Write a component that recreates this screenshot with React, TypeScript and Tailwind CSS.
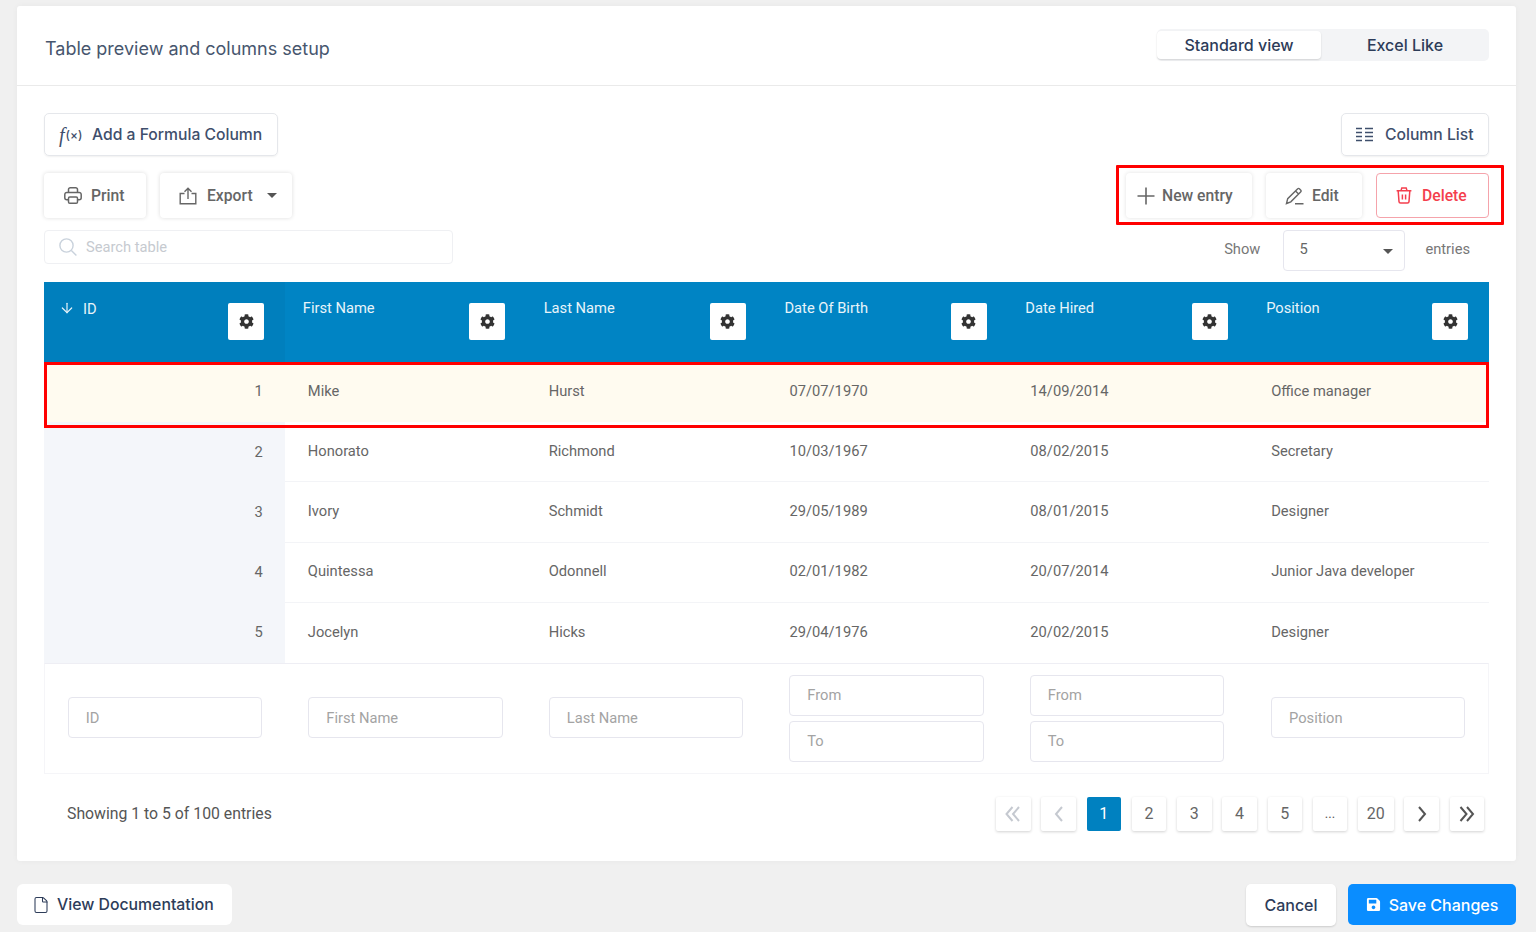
import React from "react";
import { ArrowDown, File } from "lucide-react";
import { FaCog, FaSave } from "react-icons/fa";

const columns = ["ID", "First Name", "Last Name", "Date Of Birth", "Date Hired", "Position"];
const rows = [
  ["1", "Mike", "Hurst", "07/07/1970", "14/09/2014", "Office manager"],
  ["2", "Honorato", "Richmond", "10/03/1967", "08/02/2015", "Secretary"],
  ["3", "Ivory", "Schmidt", "29/05/1989", "08/01/2015", "Designer"],
  ["4", "Quintessa", "Odonnell", "02/01/1982", "20/07/2014", "Junior Java developer"],
  ["5", "Jocelyn", "Hicks", "29/04/1976", "20/02/2015", "Designer"],
];

function Field({ label }: { label: string }) {
  return (
    <div className="flex h-[41px] w-full items-center rounded-[4px] border border-[#e6e6ee] bg-white pl-[17px] text-[14.7px] text-[#a3a3a3]">
      {label}
    </div>
  );
}

function PageBtn({ children, active, wide }: { children: React.ReactNode; active?: boolean; wide?: boolean }) {
  return (
    <div
      className={
        "flex h-[34px] items-center justify-center rounded-[2px] text-[16px] " +
        (wide ? "w-[35.5px] " : "w-[34.5px] ") +
        (active ? "bg-[#0081c0] text-white" : "bg-white text-[#666] shadow-[0_1px_3px_rgba(0,0,0,0.18)]")
      }
    >
      {children}
    </div>
  );
}

function Chevrons({ dir, double, color }: { dir: "l" | "r"; double?: boolean; color: string }) {
  const d = dir === "l"
    ? (double ? "M7.5 1 1.5 8l6 7M14 1 8 8l6 7" : "M8 1 2 8l6 7")
    : (double ? "M1.5 1l6 7-6 7M8 1l6 7-6 7" : "M2 1l6 7-6 7");
  const w = double ? 16 : 10;
  return (
    <svg width={w} height="16" viewBox={`0 0 ${w} 16`} fill="none" stroke={color} strokeWidth="2">
      <path d={d} />
    </svg>
  );
}

function ToolBtn({ children, className }: { children: React.ReactNode; className: string }) {
  return (
    <div className={"flex h-[45px] items-center rounded-[4px] bg-white font-['Roboto',sans-serif] text-[15.7px] font-medium text-[#666] " + className}>
      {children}
    </div>
  );
}

export default function App() {
  return (
    <div className="h-[932px] w-[1536px] overflow-hidden bg-[#f0f0f0] px-[17px] pr-[20px] pt-[6px] font-['Inter',sans-serif]">
      <div className="h-[855px] rounded-[3px] bg-white shadow-[0_0_6px_rgba(0,0,0,0.04)]">
        <div className="flex h-[80px] items-center justify-between border-b border-[#eaeaea] pl-[28px] pr-[27px]">
          <h1 className="pt-[6px] text-[18px] text-[#47566e]">Table preview and columns setup</h1>
          <div className="mb-[1px] flex h-[32px] w-[332px] items-start rounded-[5px] bg-[#f3f4f6] text-[16px] font-medium text-[#2d3c59]">
            <div className="mt-[2px] flex h-[28px] w-[164px] items-center justify-center rounded-[4px] bg-white shadow-[0_1px_2px_rgba(0,0,0,0.14)]">Standard view</div>
            <div className="mt-[2px] flex h-[28px] flex-1 items-center justify-center">Excel Like</div>
          </div>
        </div>

        <div className="px-[27px] pt-[27px]">
          <div className="flex h-[43px] justify-between text-[15.7px] font-medium text-[#3f4f6c]">
            <div className="flex w-[234px] items-center rounded-[5px] border border-[#e5e7eb] pl-[14px] shadow-[0_1px_2px_rgba(0,0,0,0.06)]">
              <span className="flex w-[33px] items-center">
                <span className="font-['Liberation_Serif',serif] text-[20px] font-normal italic leading-none">f</span>
                <span className="ml-[1px] text-[12px] font-medium leading-none">(×)</span>
              </span>
              Add a Formula Column
            </div>
            <div className="flex w-[148px] items-center rounded-[5px] border border-[#e5e7eb] pl-[14px] shadow-[0_1px_2px_rgba(0,0,0,0.06)]">
              <svg width="17" height="15" viewBox="0 0 17 15" className="mr-[12px]" fill="none" stroke="#3f4f6c" strokeWidth="1.4">
                <path d="M0 1.5h6M0 5.5h6M0 9.5h6M0 13.5h6M9 1.5h8M9 5.5h8M9 9.5h8M9 13.5h8" />
              </svg>
              Column List
            </div>
          </div>

          <div className="mt-[17px] flex h-[45px] justify-between">
            <div className="flex gap-[14px]">
              <ToolBtn className="w-[102px] pl-[20px] shadow-[0_0_4px_rgba(0,0,0,0.14)]">
                <svg width="18" height="17" viewBox="0 0 18 17" className="mr-[9px]" fill="none" stroke="#666" strokeWidth="1.5">
                  <path d="M4.5 5.5V2.6A1.8 1.8 0 0 1 6.3.8h5.4a1.8 1.8 0 0 1 1.8 1.8v2.9M4.3 12.8H2.8a2 2 0 0 1-2-2V7.5a2 2 0 0 1 2-2h12.4a2 2 0 0 1 2 2v3.3a2 2 0 0 1-2 2h-1.5" />
                  <rect x="4.5" y="10" width="9" height="6.2" rx="1.3" />
                </svg>
                Print
              </ToolBtn>
              <ToolBtn className="w-[132px] pl-[19px] shadow-[0_0_4px_rgba(0,0,0,0.14)]">
                <svg width="18" height="18" viewBox="0 0 18 18" className="mr-[10px]" fill="none" stroke="#666" strokeWidth="1.4">
                  <path d="M5.5 6.5H1.2v10.3h15.6V6.5h-4.3M9 12V1.5M5.5 4.8 9 1.3l3.5 3.5" />
                </svg>
                Export
                <span className="ml-[14px] h-0 w-0 border-x-[5px] border-t-[5px] border-x-transparent border-t-[#555]" />
              </ToolBtn>
            </div>
            <div className="relative flex gap-[14px]">
              <ToolBtn className="w-[126px] pl-[11px] shadow-[0_0_4px_rgba(0,0,0,0.12)]">
                <svg width="18" height="18" viewBox="0 0 18 18" className="mr-[7px]" fill="none" stroke="#666" strokeWidth="1.6">
                  <path d="M9 .5v17M.5 9h17" />
                </svg>
                New entry
              </ToolBtn>
              <ToolBtn className="w-[96px] pl-[19px] shadow-[0_0_4px_rgba(0,0,0,0.12)]">
                <svg width="19" height="18" viewBox="0 0 19 18" className="mr-[8px]" fill="none" stroke="#666" strokeWidth="1.4">
                  <path d="M1.5 16.5 2.7 11.7 12.5 1.9a1.5 1.5 0 0 1 2.1 0l1 1a1.5 1.5 0 0 1 0 2.1L5.8 14.8l-4.3 1.7ZM10.5 4l3.6 3.6M10 16.8h8.5" />
                </svg>
                Edit
              </ToolBtn>
              <ToolBtn className="w-[113px] border border-[#f5a3ab] pl-[19px] text-[#f43f4e]">
                <svg width="16" height="17" viewBox="0 0 16 17" className="mr-[10px]" fill="none" stroke="#f43f4e" strokeWidth="1.5">
                  <path d="M.6 3.8h14.8M5 3.6 5.8 1h4.4l.8 2.6M2.2 4l.8 10.6a1.5 1.5 0 0 0 1.5 1.4h7a1.5 1.5 0 0 0 1.5-1.4L13.8 4M6.4 7.5v5M9.6 7.5v5" />
                </svg>
                Delete
              </ToolBtn>
              <div className="pointer-events-none absolute -bottom-[7px] -left-[10px] -right-[15px] -top-[8px] rounded-[1px] border-[3px] border-[#ff0000]" />
            </div>
          </div>

          <div className="mt-[12px] flex h-[41px] items-start justify-between">
            <div className="flex h-[34px] w-[409px] items-center rounded-[4px] border border-[#eff0f3] pl-[14px] font-['Roboto',sans-serif] text-[14.7px] text-[#c6cad0]">
              <svg width="18" height="18" viewBox="0 0 18 18" className="mr-[9px]" fill="none" stroke="#c9d2dc" strokeWidth="1.4">
                <circle cx="7.5" cy="7.5" r="6.6" />
                <path d="m12.4 12.4 5 5" />
              </svg>
              Search table
            </div>
            <div className="flex items-center pr-[19px] font-['Roboto',sans-serif] text-[14.7px] text-[#777]">
              <span className="mb-[2px] mr-[23px]">Show</span>
              <div className="flex h-[41px] w-[122px] items-center justify-between rounded-[4px] border border-[#e6e6ee] pb-[2px] pl-[15px] pr-[11px] text-[#666]">
                5<span className="mt-[3px] h-0 w-0 border-x-[5px] border-t-[5px] border-x-transparent border-t-[#555]" />
              </div>
              <span className="mb-[2px] ml-[20px]">entries</span>
            </div>
          </div>

          <div className="mt-[11px] font-['Roboto',sans-serif]">
            <div className="grid h-[80px] grid-cols-6 bg-[#0084c4] text-[14.7px] text-[#e8f4fa]">
              {columns.map((c, i) => (
                <div key={c} className={"relative flex items-start pl-[18px] pt-[15px] " + (i === 0 ? "bg-[#007fbd]" : "")}>
                  {i === 0 && <ArrowDown size={16} strokeWidth={1.8} className="ml-[-3px] mr-[8px] mt-[3px]" />}
                  <span className={i === 0 ? "pt-[1px]" : ""}>{c}</span>
                  <div className="absolute right-[20.5px] top-[21px] flex h-[37px] w-[36px] items-center justify-center rounded-[2px] bg-white text-[#333]">
                    <FaCog size={15} />
                  </div>
                </div>
              ))}
            </div>

            <div className="relative">
              {rows.map((r, ri) => (
                <div key={r[0]} className={"grid h-[60.2px] grid-cols-6 items-stretch text-[14.7px] text-[#666] " + (ri === 0 ? "bg-[#fffbf0]" : "")}>
                  {r.map((v, i) => (
                    <div
                      key={i}
                      className={
                        "flex items-center pb-[1.5px] " +
                        (i === 0 ? "justify-end pr-[22px] " + (ri === 0 ? "" : "bg-[#f4f6fa]") : "pl-[23px] " + (ri > 0 && ri < 4 ? "border-b border-[#f3f4f7]" : ""))
                      }
                    >
                      {v}
                    </div>
                  ))}
                </div>
              ))}
              <div className="pointer-events-none absolute left-0 right-0 top-0 h-[66px] border-[3px] border-[#ff0000]" />
            </div>

            <div className="grid h-[111px] grid-cols-6 items-center border-x border-y border-x-[#f5f5f8] border-y-[#eeeef4] border-b-[#f5f5f8]">
              {["ID", "First Name", "Last Name"].map((l) => (
                <div key={l} className="mb-[1px] pl-[22.8px] pr-[23.5px]"><Field label={l} /></div>
              ))}
              {[0, 1].map((k) => (
                <div key={k} className="flex flex-col gap-[5px] pl-[22.8px] pr-[23.5px]">
                  <Field label="From" />
                  <Field label="To" />
                </div>
              ))}
              <div className="mb-[1px] pl-[23.5px] pr-[23.5px]"><Field label="Position" /></div>
            </div>

            <div className="flex h-[80px] items-center justify-between pl-[23px] pr-[5px]">
              <span className="text-[15.8px] text-[#555]">Showing 1 to 5 of 100 entries</span>
              <div className="flex gap-[10.75px]">
                <PageBtn><Chevrons dir="l" double color="#c5c9d0" /></PageBtn>
                <PageBtn><Chevrons dir="l" color="#c5c9d0" /></PageBtn>
                <PageBtn active>1</PageBtn>
                <PageBtn>2</PageBtn>
                <PageBtn>3</PageBtn>
                <PageBtn>4</PageBtn>
                <PageBtn>5</PageBtn>
                <PageBtn><span className="text-[13px] text-[#555]">...</span></PageBtn>
                <PageBtn wide>20</PageBtn>
                <PageBtn><Chevrons dir="r" color="#555" /></PageBtn>
                <PageBtn><Chevrons dir="r" double color="#555" /></PageBtn>
              </div>
            </div>
          </div>
        </div>
      </div>

      <div className="mt-[23px] flex items-start justify-between">
        <div className="flex h-[41px] w-[215px] items-center rounded-[6px] bg-white pl-[15px] text-[15.8px] font-medium text-[#2d3c59]">
          <File size={18} strokeWidth={1.4} className="mr-[7px]" />View Documentation
        </div>
        <div className="flex gap-[12px]">
          <div className="flex h-[42px] w-[90px] items-center justify-center rounded-[5px] bg-white text-[16px] font-medium text-[#2d3c59] shadow-[0_1px_2px_rgba(0,0,0,0.15)]">Cancel</div>
          <div className="flex h-[41px] w-[168px] items-center justify-center rounded-[5px] bg-[#0a8dff] text-[16px] font-medium text-white">
            <FaSave size={15} className="mr-[8px]" />Save Changes
          </div>
        </div>
      </div>
    </div>
  );
}
